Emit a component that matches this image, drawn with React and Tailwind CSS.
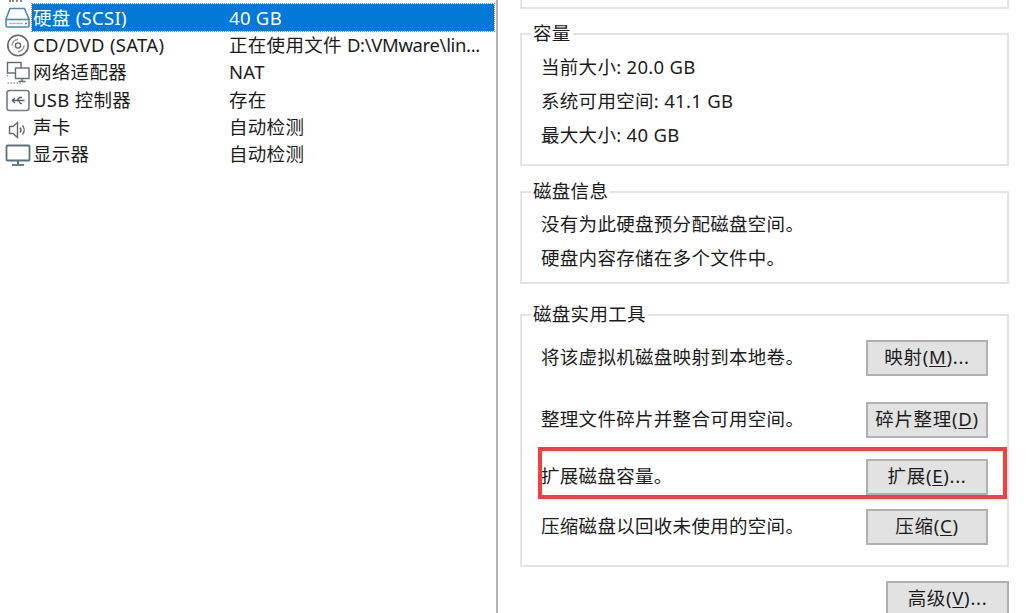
const FONT = "font-['Noto_Sans','Noto_Sans_CJK_SC',sans-serif]";

const DiskIcon = () => (
  <svg width="28" height="24" viewBox="0 0 28 24" fill="none" stroke="#4f87b3" strokeWidth="1.6">
    <path d="M6 2.5h14.5L25 13v6.5a1.5 1.5 0 0 1-1.5 1.5h-20A1.5 1.5 0 0 1 2 19.5V13z" fill="#fff" />
    <path d="M2 13.5h23" />
    <path d="M5 17.5h14" stroke="#9dbad0" strokeWidth="1.4" />
    <path d="M21 17.5h2" stroke="#4f87b3" strokeWidth="1.6" />
  </svg>
);
const CdIcon = () => (
  <svg width="28" height="24" viewBox="0 0 28 24" fill="none" stroke="#666" strokeWidth="1.6">
    <circle cx="14" cy="12.5" r="10.2" fill="#fff" />
    <circle cx="14" cy="12.5" r="2.6" strokeWidth="1.4" />
    <path d="M8 12.5a6 6 0 0 1 6-6" stroke="#9a9a9a" strokeWidth="1.4" />
    <path d="M20 12.5a6 6 0 0 1-6 6" stroke="#9a9a9a" strokeWidth="1.4" />
  </svg>
);
const NetIcon = () => (
  <svg width="28" height="24" viewBox="0 0 28 24" fill="none" stroke="#666" strokeWidth="1.4">
    <rect x="3.5" y="2.5" width="13.5" height="10.5" fill="#fff" />
    <rect x="11.5" y="8" width="13.5" height="10.5" fill="#fff" stroke="#5b6f7d" />
    <path d="M18 18.5v3M14.5 21.5h7" />
    <path d="M3.5 15v2M3.5 23h15" strokeDasharray="1.5 1.5" stroke="#9a9a9a" />
  </svg>
);
const UsbIcon = () => (
  <svg width="28" height="24" viewBox="0 0 28 24" fill="none" stroke="#6f7b85" strokeWidth="1.6">
    <rect x="3" y="2.5" width="22" height="20" rx="2.5" fill="#fff" />
    <path d="M8 12.5h12.5M8 12.5l3-2.6M8 12.5l3 2.6M13 12.5l2.5-3H18M14.5 12.5l2 3h1.5" strokeWidth="1.3" stroke="#4f6272" />
  </svg>
);
const SpeakerIcon = () => (
  <svg width="28" height="24" viewBox="0 0 28 24" fill="none" stroke="#666" strokeWidth="1.4">
    <path d="M5.5 11.5h3.5L13.5 7.5v15L9 18.5H5.5z" fill="#fff" />
    <path d="M16 12.5a4 4 0 0 1 0 5M18.5 10.5a7 7 0 0 1 0 9" />
  </svg>
);
const MonitorIcon = () => (
  <svg width="28" height="24" viewBox="0 0 28 24" fill="none" stroke="#5b6f7d" strokeWidth="1.8">
    <rect x="2.5" y="3.5" width="23" height="15" rx="1" fill="#fff" />
    <path d="M14 18.5v4" strokeWidth="2" />
    <path d="M8 23h12" strokeWidth="1.8" />
  </svg>
);

const rows = [
  { icon: <DiskIcon />, name: "硬盘 (SCSI)", value: "40 GB", selected: true },
  { icon: <CdIcon />, name: "CD/DVD (SATA)", value: <>正在使用文件 <span className="tracking-[-0.35px]">D:\VMware\lin...</span></> },
  { icon: <NetIcon />, name: "网络适配器", value: "NAT" },
  { icon: <UsbIcon />, name: "USB 控制器", value: "存在" },
  { icon: <SpeakerIcon />, name: "声卡", value: "自动检测" },
  { icon: <MonitorIcon />, name: "显示器", value: "自动检测" },
];

function Group({ title, className = "", children }) {
  return (
    <div className={`relative border-2 border-[#e4e4e4] ${className}`}>
      <span className="absolute left-[9px] top-[-15px] bg-white px-[2px] leading-[26px] text-[#1c1c1c]">{title}</span>
      {children}
    </div>
  );
}

function Btn({ pre, k, post = "", className = "w-[122px]" }) {
  return (
    <div className={`flex h-[36px] shrink-0 items-center justify-center border-2 border-[#b0b0b0] bg-[#e2e2e2] tracking-[0.7px] text-[#1c1c1c] ${className}`}>
      <span className="mb-[2px]">{pre}(<span className="underline underline-offset-2">{k}</span>){post}</span>
    </div>
  );
}

function ToolRow({ text, btn, className = "" }) {
  return (
    <div className={`flex items-center justify-between pl-[19px] pr-[19px] ${className}`}>
      <span className="mb-[2px]">{text}</span>
      {btn}
    </div>
  );
}

export default function App() {
  return (
    <div className={`relative flex h-[613px] w-[1029px] overflow-hidden bg-white text-[18.5px] leading-[26px] tracking-[0.3px] text-[#1c1c1c] ${FONT}`}>
      <div className="flex h-full w-[498px] shrink-0 flex-col border-r-2 border-[#b4b4b4] pt-[4px]">
        {rows.map((r) => (
          <div key={r.name} className="flex h-[27.3px] items-center pl-[4px]">
            <span className="flex h-[24px] w-[28px] shrink-0 items-center">{r.icon}</span>
            <div className={`flex h-full flex-1 items-center ${r.selected ? "mr-[2px] bg-[#0078d7] text-white outline-1 outline-dotted outline-[#c98a3c]" : ""}`}>
              <span className="w-[197px] shrink-0 whitespace-nowrap pl-[1px]">{r.name}</span>
              <span className="whitespace-nowrap">{r.value}</span>
            </div>
          </div>
        ))}
      </div>

      <div className="relative flex min-w-0 flex-1 flex-col pl-[22px] pr-[20px]">
        <div className="h-[9px] shrink-0 border-x-2 border-b-2 border-[#e4e4e4]" />

        <Group title="容量" className="mt-[24px] flex h-[133px] shrink-0 flex-col gap-[8px] pl-[19px] pt-[19px]">
          <div>当前大小: 20.0 GB</div>
          <div>系统可用空间: 41.1 GB</div>
          <div>最大大小: 40 GB</div>
        </Group>

        <Group title="磁盘信息" className="mt-[25px] flex h-[93px] shrink-0 flex-col gap-[8px] pl-[19px] pt-[18px]">
          <div>没有为此硬盘预分配磁盘空间。</div>
          <div>硬盘内容存储在多个文件中。</div>
        </Group>

        <Group title="磁盘实用工具" className="mt-[30px] h-[253px] shrink-0 pt-[24px]">
          <ToolRow text="将该虚拟机磁盘映射到本地卷。" btn={<Btn pre="映射" k="M" post="..." />} />
          <ToolRow className="mt-[26px]" text="整理文件碎片并整合可用空间。" btn={<Btn pre="碎片整理" k="D" />} />
          <ToolRow className="mt-[21px]" text="扩展磁盘容量。" btn={<Btn pre="扩展" k="E" post="..." />} />
          <ToolRow className="mt-[14px]" text="压缩磁盘以回收未使用的空间。" btn={<Btn pre="压缩" k="C" />} />
        </Group>

        <div className="mt-[14px] flex justify-end">
          <Btn pre="高级" k="V" post="..." className="w-[123px]" />
        </div>

        <div className="absolute left-[40px] top-[447px] h-[52px] w-[469px] border-[4px] border-[#f33f3f]" />
      </div>

      <div className="absolute left-[9px] top-0 h-[2px] w-[13px] border-t-2 border-dotted border-[#888]" />
    </div>
  );
}
